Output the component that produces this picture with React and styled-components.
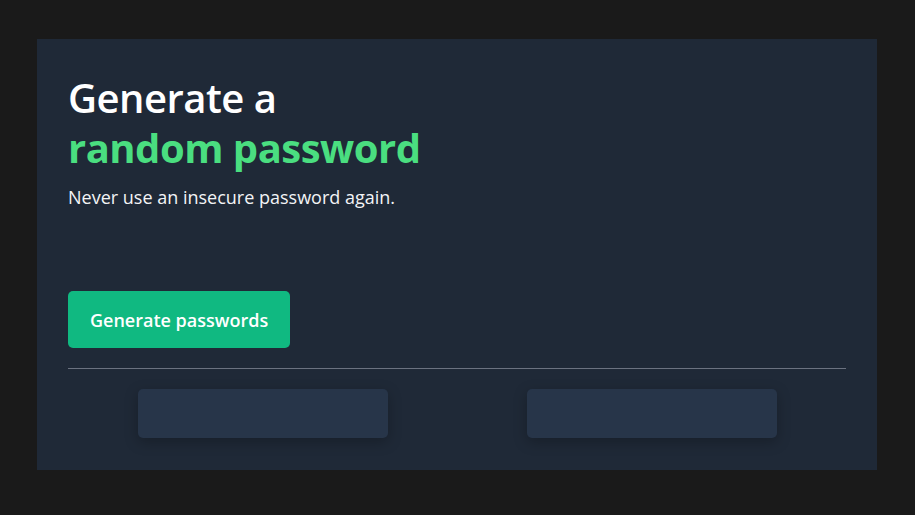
import React from 'react';
import styled, { createGlobalStyle } from 'styled-components';

const GlobalStyle = createGlobalStyle`
    body {
        margin: 0;
        background: #1a1a1a;
        font-family: 'Open Sans', 'Noto Sans', sans-serif;
    }
`;

const Panel = styled.main`
    width: 840px;
    height: 431px;
    box-sizing: border-box;
    margin: 39px 0 0 37px;
    padding: 34px 31px 32px;
    background: #1f2937;
    display: flex;
    flex-direction: column;
`;

const Title = styled.h1`
    margin: 0;
    font-size: 40px;
    line-height: 50px;
    font-weight: 600;
    color: #ffffff;
    letter-spacing: -0.5px;

    span {
        display: block;
        color: #4ade80;
        font-weight: 700;
    }
`;

const Subtitle = styled.p`
    margin: 11px 0 0;
    font-size: 18px;
    line-height: 26px;
    color: #f3f4f6;
    font-weight: 400;
`;

const GenerateButton = styled.button`
    align-self: flex-start;
    margin-top: auto;
    height: 57px;
    padding: 0 22px;
    border: none;
    border-radius: 5px;
    background: #10b981;
    color: #ffffff;
    font-family: inherit;
    font-size: 18px;
    font-weight: 600;
    cursor: pointer;
`;

const Divider = styled.hr`
    margin: 20px 0 20px;
    border: none;
    border-top: 1px solid #6b7280;
`;

const Results = styled.div`
    display: grid;
    grid-template-columns: 1fr 1fr;
    justify-items: center;
`;

const PasswordBox = styled.div`
    width: 250px;
    height: 49px;
    border-radius: 5px;
    background: #273549;
    box-shadow: 0 4px 14px rgba(0, 0, 0, 0.25);
`;

export default function App() {
    const passwords = ['', ''];

    return (
        <>
            <GlobalStyle />
            <Panel>
                <Title>
                    Generate a
                    <span>random password</span>
                </Title>
                <Subtitle>Never use an insecure password again.</Subtitle>
                <GenerateButton>Generate passwords</GenerateButton>
                <Divider />
                <Results>
                    {passwords.map((pw, i) => (
                        <PasswordBox key={i}>{pw}</PasswordBox>
                    ))}
                </Results>
            </Panel>
        </>
    );
}
